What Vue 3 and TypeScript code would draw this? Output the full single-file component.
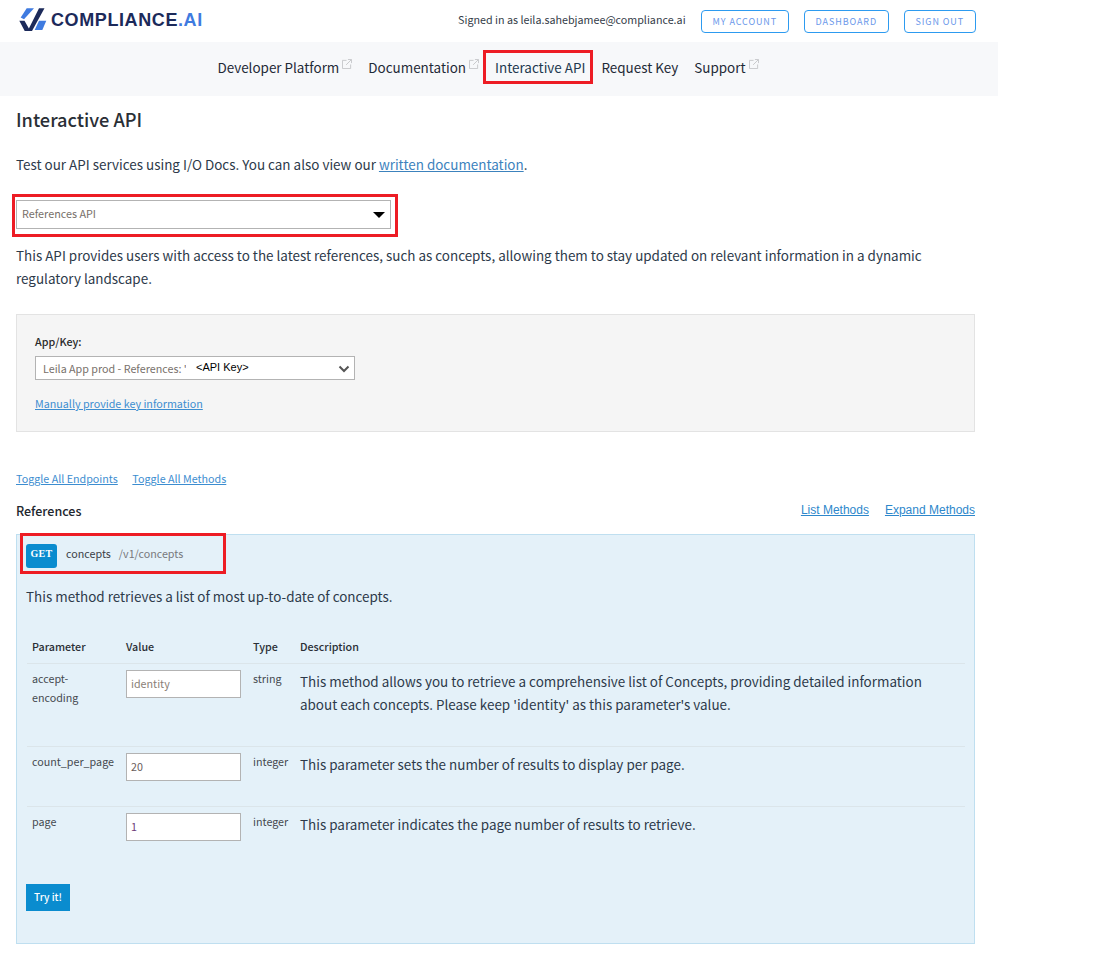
<script setup lang="ts">
const navItems = [
  { label: 'Developer Platform', ext: true, mark: false },
  { label: 'Documentation', ext: true, mark: false },
  { label: 'Interactive API', ext: false, mark: true },
  { label: 'Request Key', ext: false, mark: false },
  { label: 'Support', ext: true, mark: false },
]
const rows = [
  { name: 'accept-\nencoding', value: 'identity', cls: 'ph', type: 'string', h: 'r1', desc: "This method allows you to retrieve a comprehensive list of Concepts, providing detailed information about each concepts. Please keep 'identity' as this parameter's value." },
  { name: 'count_per_page', value: '20', cls: '', type: 'integer', h: 'r2', desc: 'This parameter sets the number of results to display per page.' },
  { name: 'page', value: '1', cls: 'purple', type: 'integer', h: 'r2', desc: 'This parameter indicates the page number of results to retrieve.' },
]
</script>

<template>
  <div class="page">
    <header class="top">
      <div class="logo">
        <svg width="28" height="24" viewBox="0 0 28 24">
          <path d="M7.7.3H15L5 11.2 1.7 9.5z" fill="#3f7be0" />
          <path d="M20 .3h5.5L13 23H5.7L.3 12.7h5.2l4.4 7.8z" fill="#1c2a5a" />
          <path d="M20 12.7h7.3L23.3 22h-7.6z" fill="#3f7be0" />
        </svg>
        <span class="logo-text">COMPLIANCE<span class="logo-ai">.AI</span></span>
      </div>
      <div class="account">
        <span class="signed">Signed in as leila.sahebjamee@compliance.ai</span>
        <a class="btn">MY ACCOUNT</a>
        <a class="btn">DASHBOARD</a>
        <a class="btn">SIGN OUT</a>
      </div>
    </header>

    <nav class="nav">
      <a v-for="item in navItems" :key="item.label" class="nav-item" :class="{ marked: item.mark }">
        {{ item.label }}
        <svg v-if="item.ext" class="ext" width="10" height="10" viewBox="0 0 11 11" fill="none" stroke="#c4c6c8" stroke-width="1">
          <path d="M5 1.5H.5v9h9V6" />
          <path d="M4.5 6.5 10 1M6.5.5h4v4" />
        </svg>
      </a>
    </nav>

    <main class="content">
      <h1>Interactive API</h1>
      <p class="intro">Test our API services using I/O Docs. You can also view our <a class="doc-link">written documentation</a>.</p>

      <div class="api-mark">
        <div class="api-select">
          <span>References API</span>
          <span class="caret"></span>
        </div>
      </div>

      <p class="summary">This API provides users with access to the latest references, such as concepts, allowing them to stay updated on relevant information in a dynamic regulatory landscape.</p>

      <section class="key-panel">
        <div class="key-label">App/Key:</div>
        <div class="key-select">
          <span class="key-text">Leila App prod - References: '</span>
          <span class="key-cover">&lt;API Key&gt;</span>
          <svg class="chev" width="12" height="8" viewBox="0 0 12 8" fill="none" stroke="#555" stroke-width="2">
            <path d="M1.5 1.5 6 6l4.5-4.5" />
          </svg>
        </div>
        <a class="small-link manual">Manually provide key information</a>
      </section>

      <div class="toggles">
        <a class="small-link">Toggle All Endpoints</a>
        <a class="small-link">Toggle All Methods</a>
      </div>

      <div class="ref-head">
        <h2>References</h2>
        <div class="ref-links">
          <a class="arial-link">List Methods</a>
          <a class="arial-link">Expand Methods</a>
        </div>
      </div>

      <section class="method">
        <div class="method-head">
          <span class="get">GET</span>
          <span class="m-name">concepts</span>
          <span class="m-path">/v1/concepts</span>
        </div>
        <p class="m-desc">This method retrieves a list of most up-to-date of concepts.</p>

        <table class="params">
          <thead>
            <tr>
              <th class="c1">Parameter</th>
              <th class="c2">Value</th>
              <th class="c3">Type</th>
              <th>Description</th>
            </tr>
          </thead>
          <tbody>
            <tr v-for="r in rows" :key="r.name" :class="r.h">
              <td class="name first">{{ r.name }}</td>
              <td><div class="input" :class="r.cls">{{ r.value }}</div></td>
              <td class="name">{{ r.type }}</td>
              <td class="desc">{{ r.desc }}</td>
            </tr>
          </tbody>
        </table>

        <button class="try" type="button">Try it!</button>
      </section>
    </main>
  </div>
</template>

<style scoped>
.page {
  width: 998px;
  font-family: "Noto Sans CJK SC", "Noto Sans", sans-serif;
  color: #2d3a4a;
}
a { cursor: pointer; }
.top {
  height: 42px;
  display: flex;
  align-items: center;
  justify-content: space-between;
  padding: 0 22px 0 19px;
  box-sizing: border-box;
}
.logo { display: flex; align-items: center; gap: 4px; height: 42px; padding-bottom: 2px; box-sizing: border-box; }
.logo-text {
  font-family: "Liberation Sans", sans-serif;
  font-weight: 700;
  font-size: 18px;
  line-height: 20px;
  color: #1c2a5a;
  letter-spacing: 0.6px;
}
.logo-ai { color: #3f7be0; }
.account { display: flex; align-items: center; margin-top: 1px; }
.signed { font-size: 10.74px; line-height: 16px; color: #333b47; margin-right: 15px; margin-bottom: 4px; }
.btn {
  height: 23px;
  box-sizing: border-box;
  border: 1px solid #2d9bf0;
  border-radius: 4px;
  padding: 0 11px;
  margin-left: 14.5px;
  font-size: 9px;
  letter-spacing: 0.9px;
  line-height: 21px;
  color: #6a97ea;
}
.signed + .btn { margin-left: 0; }
.nav {
  height: 54px;
  background: #f7f8fa;
  display: flex;
  justify-content: center;
  align-items: flex-start;
  padding: 8px 22px 0 0;
  box-sizing: border-box;
}
.nav-item {
  font-size: 13.44px;
  line-height: 35px;
  height: 34px;
  color: #1f2a37;
  padding: 0 8px;
  white-space: nowrap;
  position: relative;
  box-sizing: border-box;
}
.nav-item.marked { color: #22384f; }
.nav-item.marked::after {
  content: "";
  position: absolute;
  left: -4px;
  right: 0;
  top: 0;
  bottom: 0;
  border: 3px solid #ed1c24;
}
.ext { position: relative; top: -4px; }
.content { padding: 0 23px 0 16px; }
h1 {
  margin: 0;
  padding-top: 11px;
  font-size: 18.2px;
  line-height: 24px;
  font-weight: 500;
  color: #2a2f36;
}
.intro {
  margin: 22px 0 0;
  font-size: 13.44px;
  line-height: 23px;
}
.doc-link { color: #3c82bd; text-decoration: underline; }
.api-mark {
  margin: 18px 0 0 -4px;
  width: 386px;
  height: 43px;
  box-sizing: border-box;
  border: 3px solid #ed1c24;
  padding: 3px 4px 0 1px;
}
.api-select {
  height: 29px;
  box-sizing: border-box;
  border: 1px solid #b3b3b3;
  display: flex;
  align-items: center;
  justify-content: space-between;
  padding: 0 5px 3px 5px;
  font-size: 10.8px;
  color: #77706a;
  background: #fff;
}
.caret {
  width: 0;
  height: 0;
  border-left: 6px solid transparent;
  border-right: 6px solid transparent;
  border-top: 6px solid #000;
  margin-top: 4px;
}
.summary {
  margin: 7px 0 0;
  font-size: 13.44px;
  line-height: 23px;
}
.key-panel {
  margin-top: 24px;
  height: 118px;
  box-sizing: border-box;
  background: #f5f5f5;
  border: 1px solid #e3e3e3;
  padding: 19px 18px 0;
}
.key-label { font-size: 10.74px; line-height: 16px; font-weight: 500; color: #2a2a2a; }
.key-select {
  margin-top: 6px;
  width: 320px;
  height: 24px;
  box-sizing: border-box;
  border: 1px solid #b3b3b3;
  background: #fff;
  position: relative;
  font-size: 10.74px;
  line-height: 24px;
  color: #77706a;
  padding-left: 7px;
}
.key-text { display: block; width: 144px; overflow: hidden; white-space: nowrap; }
.key-cover {
  position: absolute;
  left: 150px;
  top: 0;
  padding-left: 10px;
  line-height: 20px;
  background: #fff;
  color: #000;
  font-family: "Liberation Sans", sans-serif;
  font-size: 11px;
}
.chev { position: absolute; right: 4px; top: 8px; }
.small-link { font-size: 10.74px; line-height: 16px; color: #3c8dd0; text-decoration: underline; }
.manual { display: block; margin-top: 16px; }
.toggles { margin-top: 39px; display: flex; gap: 14.5px; }
.ref-head {
  margin-top: 12px;
  height: 23px;
  display: flex;
  justify-content: space-between;
  align-items: center;
}
h2 { margin: 0; font-size: 12.5px; line-height: 18px; font-weight: 500; color: #22272e; }
.ref-links { display: flex; gap: 16px; margin-top: -1px; }
.arial-link {
  font-family: "Liberation Sans", sans-serif;
  font-size: 12px;
  line-height: 16px;
  color: #2d87cb;
  text-decoration: underline;
}
.method {
  margin-top: 12px;
  height: 410px;
  box-sizing: border-box;
  background: #e4f1f9;
  border: 1px solid #bfdff0;
  padding: 9px 9px 0;
  position: relative;
}
.method-head {
  height: 24px;
  display: flex;
  align-items: flex-start;
  font-size: 10.74px;
  line-height: 20px;
}
.method-head::after {
  content: "";
  position: absolute;
  left: 3px;
  top: -2px;
  width: 206px;
  height: 41px;
  box-sizing: border-box;
  border: 3px solid #ed1c24;
}
.get {
  width: 31px;
  height: 24px;
  border-radius: 3px;
  background: #0a8ccf;
  color: #fff;
  font-family: "Liberation Serif", serif;
  font-weight: 700;
  font-size: 10px;
  letter-spacing: 0.3px;
  line-height: 20px;
  text-align: center;
}
.m-name { margin-left: 9px; color: #3a3d45; }
.m-path { margin-left: 8px; color: #77787c; }
.m-desc { margin: 17px 0 0; font-size: 13.44px; line-height: 23px; }
.params {
  margin: 31px 0 0 1px;
  width: 938px;
  border-collapse: collapse;
  table-layout: fixed;
  font-size: 10.74px;
}
th {
  text-align: left;
  font-weight: 500;
  line-height: 16px;
  padding: 0 0 8px 0;
  color: #2a2f36;
  border-bottom: 1px solid #dbe5ea;
}
th.c1 { padding-left: 5px; }
.c1 { width: 94px; }
.c2 { width: 127px; }
.c3 { width: 47px; }
td {
  vertical-align: top;
  padding: 6px 0 0 0;
  border-bottom: 1px solid #dbe5ea;
}
tbody tr:last-child td { border-bottom: none; }
.r1 td { height: 76px; }
.r2 td { height: 53px; }
td.name { padding-top: 5px; line-height: 19px; color: #44494f; }
td.first { padding-left: 5px; white-space: pre-line; }
.input {
  width: 115px;
  height: 28px;
  box-sizing: border-box;
  border: 1px solid #b3b3b3;
  background: #fff;
  padding: 0 4px;
  font-size: 10.74px;
  line-height: 25px;
  color: #6a5d5d;
}
.input.ph { color: #8a8076; }
.input.purple { color: #6b3a78; }
td.desc {
  font-size: 13.44px;
  line-height: 23px;
  padding: 6px 30px 0 0;
  color: #2d3a4a;
}
.try {
  display: block;
  margin-top: 18px;
  width: 44px;
  height: 27px;
  border: none;
  padding: 0 0 2px;
  background: #0a8ccf;
  color: #fff;
  font-family: inherit;
  font-weight: 500;
  font-size: 10px;
}
</style>
